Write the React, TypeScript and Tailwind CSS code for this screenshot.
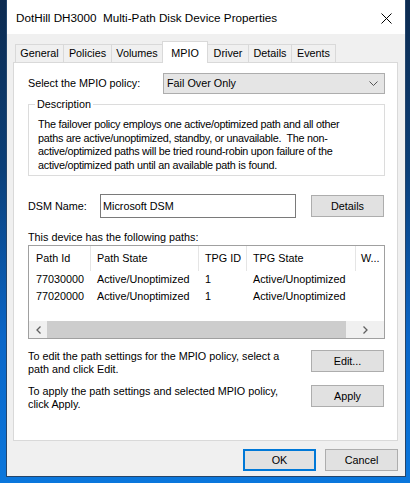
import React from "react";

const font = { fontFamily: '"Liberation Sans", Arial, sans-serif' };

function Tab({ label, w, selected }: { label: string; w: string; selected?: boolean }) {
  if (selected) {
    return (
      <div
        className={`${w} h-[22px] -mb-px relative z-10 bg-white border border-b-0 border-[#d9d9d9] flex items-start justify-center pt-[3px] text-black`}
      >
        {label}
      </div>
    );
  }
  return (
    <div
      className={`${w} h-[18px] -ml-px first:ml-0 bg-[#f0f0f0] border border-b-0 border-[#d9d9d9] flex items-center justify-center text-black`}
    >
      {label}
    </div>
  );
}

function Btn({ children, cls = "" }: { children: React.ReactNode; cls?: string }) {
  return (
    <div
      className={`w-[73px] h-[22px] bg-[#e1e1e1] border border-[#adadad] flex items-center justify-center text-black ${cls}`}
    >
      {children}
    </div>
  );
}

export default function App() {
  return (
    <div
      className="w-[410px] h-[483px] overflow-hidden bg-[linear-gradient(180deg,#0d2b50_0%,#0b3f78_35%,#0a66c8_70%,#0b77dc_100%)] pl-[6px] text-[10.8px] whitespace-nowrap"
      style={font}
    >
      <div className="w-[400px] h-[477px] bg-[#f0f0f0] border border-t-0 border-[#24456b] flex flex-col">
        {/* Title bar */}
        <div className="h-[34px] bg-white flex items-center justify-between pl-[9px] pr-[13px]">
          <span className="text-[11.7px] text-black whitespace-pre pt-[2px]">DotHill DH3000  Multi-Path Disk Device Properties</span>
          <svg width="11" height="11" viewBox="0 0 11 11" className="mt-[3px]">
            <path d="M0.5 0.5 L10.5 10.5 M10.5 0.5 L0.5 10.5" stroke="#000" strokeWidth="1" />
          </svg>
        </div>

        {/* Body */}
        <div className="flex-1 flex flex-col pt-[7px] pl-[6px]">
          {/* Tabs */}
          <div className="flex items-end h-[21px] pl-[2px]">
            <Tab label="General" w="w-[49px]" />
            <Tab label="Policies" w="w-[49px]" />
            <Tab label="Volumes" w="w-[52px]" />
            <div className="-ml-px">
              <Tab label="MPIO" w="w-[46px]" selected />
            </div>
            <div className="-ml-px flex items-end">
              <Tab label="Driver" w="w-[42px]" />
              <Tab label="Details" w="w-[44px]" />
              <Tab label="Events" w="w-[45px]" />
            </div>
          </div>

          {/* Panel */}
          <div className="w-[385px] h-[379px] bg-white border border-[#d9d9d9] pl-[14px] pr-[11px] pt-[10px] text-black">
            {/* Policy row */}
            <div className="flex items-center h-[21px]">
              <span className="w-[135px]">Select the MPIO policy:</span>
              <div className="w-[222px] h-[21px] bg-[#e5e5e5] border border-[#adadad] flex items-center justify-between pl-[3px] pr-[6px]">
                <span>Fail Over Only</span>
                <svg width="9" height="5" viewBox="0 0 9 5">
                  <path d="M0.5 0.5 L4.5 4.5 L8.5 0.5" stroke="#555" strokeWidth="1" fill="none" />
                </svg>
              </div>
            </div>

            {/* Description */}
            <div className="relative mt-[10px] w-[357px] h-[72px] border border-[#dcdcdc] pl-[9px] pt-[13px]">
              <span className="absolute -top-[8px] left-[6px] bg-white px-[2px] leading-[14px]">Description</span>
              <div className="leading-[13.5px] tracking-[-0.25px]">
                <div>The failover policy employs one active/optimized path and all other</div>
                <div className="whitespace-pre">paths are active/unoptimized, standby, or unavailable.  The non-</div>
                <div>active/optimized paths will be tried round-robin upon failure of the</div>
                <div>active/optimized path until an available path is found.</div>
              </div>
            </div>

            {/* DSM row */}
            <div className="flex items-center mt-[18px] h-[24px]">
              <span className="w-[72px]">DSM Name:</span>
              <div className="w-[196px] h-[24px] border border-[#7a7a7a] pl-[2px] pt-[3px]">Microsoft DSM</div>
              <Btn cls="ml-[15px]">Details</Btn>
            </div>

            <div className="mt-[12px] leading-[14px]">This device has the following paths:</div>

            {/* List view */}
            <div className="mt-[1px] w-[357px] h-[94px] border border-[#a0a0a0] flex flex-col">
              <div className="flex h-[25px] items-center">
                <div className="w-[62px] h-full flex items-center pl-[7px] border-r border-[#e5e5e5]">Path Id</div>
                <div className="w-[108px] h-full flex items-center pl-[6px] border-r border-[#e5e5e5]">Path State</div>
                <div className="w-[48px] h-full flex items-center pl-[6px] border-r border-[#e5e5e5]">TPG ID</div>
                <div className="w-[109px] h-full flex items-center pl-[6px] border-r border-[#e5e5e5]">TPG State</div>
                <div className="flex-1 h-full flex items-center pl-[5px]">W...</div>
              </div>
              <div className="flex-1">
                {[["77030000"], ["77020000"]].map(([id]) => (
                  <div key={id} className="flex h-[17px] items-center">
                    <div className="w-[62px] pl-[7px]">{id}</div>
                    <div className="w-[108px] pl-[6px]">Active/Unoptimized</div>
                    <div className="w-[48px] pl-[6px]">1</div>
                    <div className="w-[109px] pl-[6px]">Active/Unoptimized</div>
                  </div>
                ))}
              </div>
              <div className="h-[17px] bg-[#f0f0f0] flex items-center">
                <div className="w-[18px] flex items-center justify-center">
                  <svg width="5" height="8" viewBox="0 0 5 8">
                    <path d="M4.5 0.5 L1 4 L4.5 7.5" stroke="#606060" strokeWidth="1.3" fill="none" />
                  </svg>
                </div>
                <div className="w-[299px] h-[17px] bg-[#cdcdcd]" />
                <div className="flex-1 flex items-center justify-center">
                  <svg width="5" height="8" viewBox="0 0 5 8">
                    <path d="M0.5 0.5 L4 4 L0.5 7.5" stroke="#606060" strokeWidth="1.3" fill="none" />
                  </svg>
                </div>
              </div>
            </div>

            {/* Edit row */}
            <div className="flex mt-[11px] items-start">
              <div className="w-[283px] leading-[13px]">
                <div>To edit the path settings for the MPIO policy, select a</div>
                <div>path and click Edit.</div>
              </div>
              <Btn>Edit...</Btn>
            </div>

            {/* Apply row */}
            <div className="flex mt-[9px] items-start">
              <div className="w-[283px] leading-[13px]">
                <div>To apply the path settings and selected MPIO policy,</div>
                <div>click Apply.</div>
              </div>
              <Btn>Apply</Btn>
            </div>
          </div>

          {/* Bottom buttons */}
          <div className="flex justify-end gap-[9px] mt-[8px] pr-[7px]">
            <div className="w-[73px] h-[22px] bg-[#e1e1e1] border-2 border-[#0078d7] flex items-center justify-center text-black">
              OK
            </div>
            <Btn>Cancel</Btn>
          </div>
        </div>
      </div>
    </div>
  );
}
